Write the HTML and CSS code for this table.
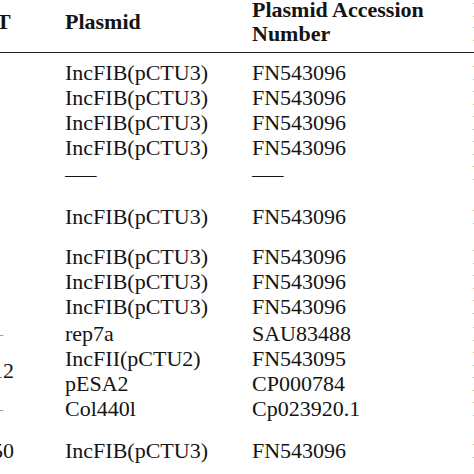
FILE: index.html
```html
<!DOCTYPE html>
<html lang="en">
<head>
<meta charset="utf-8">
<title>Plasmid table</title>
<link rel="stylesheet" href="styles.css">
</head>
<body>
<table class="tbl">
  <colgroup>
    <col class="c1"><col class="c2"><col class="c3"><col class="c4">
  </colgroup>
  <thead>
    <tr>
      <th class="st"><span class="t">T</span></th>
      <th class="mid">Plasmid</th>
      <th>Plasmid Accession<br>Number</th>
      <th class="edge">I<br>I</th>
    </tr>
  </thead>
  <tbody>
    <tr class="first">
      <td></td>
      <td>IncFIB(pCTU3)<br>IncFIB(pCTU3)<br>IncFIB(pCTU3)<br>IncFIB(pCTU3)<br><span class="nil">——</span></td>
      <td>FN543096<br>FN543096<br>FN543096<br>FN543096<br><span class="nil">——</span></td>
      <td class="edge">I<br>I<br>I<br>I<br>I</td>
    </tr>
    <tr class="gap-l">
      <td></td>
      <td>IncFIB(pCTU3)</td>
      <td>FN543096</td>
      <td class="edge">I</td>
    </tr>
    <tr class="gap-m">
      <td></td>
      <td>IncFIB(pCTU3)<br>IncFIB(pCTU3)<br>IncFIB(pCTU3)</td>
      <td>FN543096<br>FN543096<br>FN543096</td>
      <td class="edge">I<br>I<br>I</td>
    </tr>
    <tr class="gap-s">
      <td class="dim">–</td>
      <td>rep7a</td>
      <td>SAU83488</td>
      <td class="edge">I</td>
    </tr>
    <tr>
      <td class="mid">12</td>
      <td>IncFII(pCTU2)<br>pESA2</td>
      <td>FN543095<br>CP000784</td>
      <td class="edge">I<br>I</td>
    </tr>
    <tr>
      <td class="dim">–</td>
      <td>Col440l</td>
      <td>Cp023920.1</td>
      <td class="edge">I</td>
    </tr>
    <tr class="gap-l">
      <td>50</td>
      <td>IncFIB(pCTU3)</td>
      <td>FN543096</td>
      <td class="edge">I</td>
    </tr>
  </tbody>
</table>
</body>
</html>
```

FILE: styles.css
```css
html, body {
  margin: 0;
  padding: 0;
  background: #ffffff;
  overflow: hidden;
  width: 474px;
  height: 474px;
}

.tbl {
  margin-top: -2.4px;
  margin-left: -8px;
  border-collapse: collapse;
  table-layout: fixed;
  width: 540px;
  font-family: "Liberation Serif", "Times New Roman", serif;
  font-size: 22px;
  color: #141414;
}

.c1 { width: 73px; }
.c2 { width: 187px; }
.c3 { width: 220px; }
.c4 { width: 60px; }

.tbl th {
  font-weight: bold;
  text-align: left;
  vertical-align: top;
  line-height: 24px;
  padding: 0 0 6.5px 0;
  border-bottom: 1.5px solid #222;
  white-space: nowrap;
}

.tbl th.mid {
  vertical-align: middle;
}

.tbl th.st {
  vertical-align: middle;
  padding-left: 4px;
}

.tbl td {
  text-align: left;
  vertical-align: top;
  line-height: 25px;
  padding: 0;
  white-space: nowrap;
}

.tbl .edge {
  font-weight: normal;
  color: #555;
  padding-left: 0.5px;
}

.tbl td.mid {
  vertical-align: middle;
}

.tbl td.dim {
  color: #9a9a9a;
}

.tbl tr.first td { padding-top: 6.5px; }
.tbl tr.gap-l td { padding-top: 17px; }
.tbl tr.gap-m td { padding-top: 15px; }
.tbl tr.gap-s td { padding-top: 2px; }

.nil {
  font-size: 16px;
  letter-spacing: -0.5px;
}
```
